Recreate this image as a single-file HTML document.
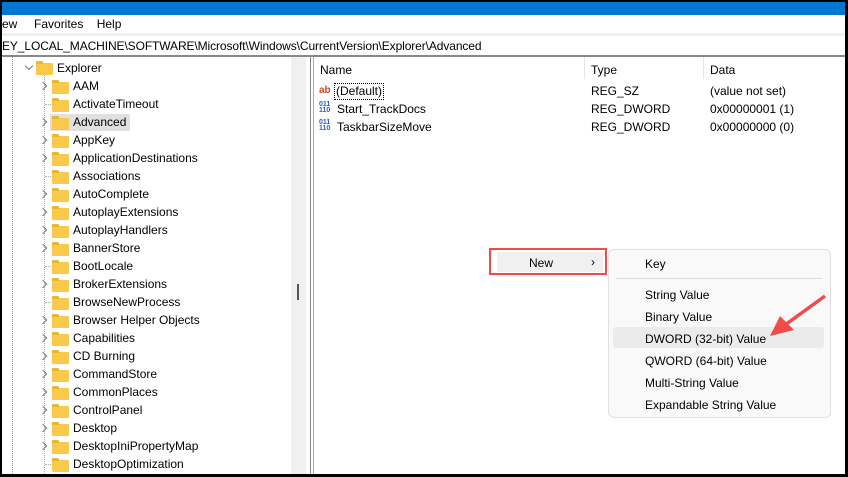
<!DOCTYPE html><html style="overflow:hidden;width:848px;height:477px"><head><style>
body{margin:0;width:848px;height:477px;overflow:hidden;background:#000;font-family:"Liberation Sans",sans-serif;font-size:12px;color:#000;position:relative}
.a{position:absolute}
.row{position:absolute;height:18px;line-height:18px;white-space:nowrap}
.fold{position:absolute;width:17px;height:12px;background:#f8c94a;border-radius:1px}
.fold:before{content:"";position:absolute;left:0;top:-2px;width:7px;height:3px;background:#e9b535;border-radius:1px 1px 0 0}
.chev{position:absolute;width:5px;height:5px;border-right:1.3px solid #777;border-bottom:1.3px solid #777;transform:rotate(-45deg)}
.mi{position:absolute;left:645px;font-size:12px}
</style></head><body>
<div class="a" style="left:2px;top:2px;width:843px;height:13px;background:#0078d4"></div>
<div class="a" style="left:2px;top:15px;width:843px;height:18px;background:#fff"></div>
<div class="a" style="left:2px;top:17px;font-size:12px">ew&nbsp;&nbsp;&nbsp;&nbsp;&nbsp;Favorites&nbsp;&nbsp;&nbsp;&nbsp;Help</div>
<div class="a" style="left:2px;top:33px;width:843px;height:3px;background:#f0f0f0"></div>
<div class="a" style="left:2px;top:36px;width:843px;height:19px;background:#fff"></div>
<div class="a" style="left:2px;top:39px;font-size:12px;letter-spacing:-0.1px">EY_LOCAL_MACHINE\SOFTWARE\Microsoft\Windows\CurrentVersion\Explorer\Advanced</div>
<div class="a" style="left:2px;top:55px;width:843px;height:2px;background:#888"></div>
<div class="a" style="left:2px;top:57px;width:843px;height:417px;background:#fff;overflow:hidden">
<div class="a" style="left:289px;top:0;width:15px;height:417px;background:#f0f0f0"></div>
<div class="a" style="left:308px;top:0;width:1px;height:417px;background:#888"></div>
<div class="a" style="left:311px;top:0;width:1px;height:417px;background:#aaa"></div>
<div class="a" style="left:295px;top:227px;width:2px;height:16px;background:#555"></div>
<div class="a" style="left:10px;top:0;height:417px;border-left:1px dotted #999"></div>
<div class="a" style="left:42px;top:18px;height:399px;border-left:1px dotted #aaa"></div>
<div id="tree" class="a" style="left:-2px;top:-56px;width:300px;height:480px"></div>
</div>
<div class="a" style="left:320px;top:63px">Name</div>
<div class="a" style="left:584px;top:57px;width:1px;height:22px;background:#e5e5e5"></div>
<div class="a" style="left:591px;top:63px">Type</div>
<div class="a" style="left:703px;top:57px;width:1px;height:22px;background:#e5e5e5"></div>
<div class="a" style="left:710px;top:63px">Data</div>
<div class="a" style="left:319px;top:84px;width:14px;height:13px;font-size:10px;font-weight:bold;color:#d04a2a;line-height:13px">ab</div>
<div class="a" style="left:334px;top:83px;border:1px dotted #000;padding:0 1px;line-height:15px">(Default)</div>
<div class="a" style="left:591px;top:84px">REG_SZ</div><div class="a" style="left:710px;top:84px">(value not set)</div>
<div class="a" style="left:319px;top:102px;width:14px;height:12px;font-size:7px;font-weight:bold;color:#2a5cc8;line-height:6px">011<br>110</div>
<div class="a" style="left:337px;top:102px">Start_TrackDocs</div>
<div class="a" style="left:591px;top:102px">REG_DWORD</div><div class="a" style="left:710px;top:102px">0x00000001 (1)</div>
<div class="a" style="left:319px;top:120px;width:14px;height:12px;font-size:7px;font-weight:bold;color:#2a5cc8;line-height:6px">011<br>110</div>
<div class="a" style="left:337px;top:120px">TaskbarSizeMove</div>
<div class="a" style="left:591px;top:120px">REG_DWORD</div><div class="a" style="left:710px;top:120px">0x00000000 (0)</div>
<div class="a" style="left:492px;top:250px;width:116px;height:24px;background:#fff;box-shadow:0 1px 3px rgba(0,0,0,.15)"></div>
<div class="a" style="left:497px;top:252px;width:107px;height:20px;background:#f0f0f0"></div>
<div class="a" style="left:489px;top:248px;width:114px;height:23px;border:2px solid #ee4b4b"></div>
<div class="a" style="left:529px;top:256px">New</div>
<div class="a" style="left:591px;top:255px;font-size:12px">›</div>
<div class="a" style="left:608px;top:249px;width:221px;height:167px;background:#f9f9f9;border:1px solid #e0e0e0;border-radius:6px"></div>
<div class="a" style="left:616px;top:278px;width:206px;height:1px;background:#ddd"></div>
<div class="a" style="left:613px;top:327px;width:211px;height:21px;background:#ebebeb;border-radius:3px"></div>
<div class="mi" style="top:257px">Key</div>
<div class="mi" style="top:288px">String Value</div>
<div class="mi" style="top:310px">Binary Value</div>
<div class="mi" style="top:332px">DWORD (32-bit) Value</div>
<div class="mi" style="top:354px">QWORD (64-bit) Value</div>
<div class="mi" style="top:376px">Multi-String Value</div>
<div class="mi" style="top:398px">Expandable String Value</div>
<svg class="a" style="left:760px;top:290px" width="70" height="52"><line x1="65" y1="6" x2="25" y2="35" stroke="#ee4b4b" stroke-width="3.5"/><polygon points="10,46 20,26 34,40" fill="#ee4b4b"/></svg>
<script>
var n=["AAM","ActivateTimeout","Advanced","AppKey","ApplicationDestinations","Associations","AutoComplete","AutoplayExtensions","AutoplayHandlers","BannerStore","BootLocale","BrokerExtensions","BrowseNewProcess","Browser Helper Objects","Capabilities","CD Burning","CommandStore","CommonPlaces","ControlPanel","Desktop","DesktopIniPropertyMap","DesktopOptimization"];
var noArr={"ActivateTimeout":1,"Associations":1,"BootLocale":1,"BrowseNewProcess":1,"DesktopOptimization":1};
var h='<div class="row" style="left:25px;top:58px"><div class="chev" style="left:1px;top:4px;transform:rotate(45deg)"></div><div class="fold" style="left:11px;top:4px"></div><span style="position:absolute;left:32px">Explorer</span></div>';
n.forEach(function(t,i){var y=76+i*18;
if(t=="Advanced")h+='<div class="a" style="left:50px;top:'+(y+1)+'px;width:80px;height:17px;background:#e0e0e0"></div>';
h+='<div class="row" style="left:40px;top:'+y+'px">'+(noArr[t]?'<div class="a" style="left:5px;top:9px;width:8px;border-top:1px dotted #aaa"></div>':'<div class="chev" style="left:0px;top:6px"></div>')+'<div class="fold" style="left:12px;top:5px"></div><span style="position:absolute;left:33px">'+t+'</span></div>';});
h+='<div class="fold" style="left:52px;top:476px"></div>';
document.getElementById('tree').innerHTML=h;
</script>
</body></html>
